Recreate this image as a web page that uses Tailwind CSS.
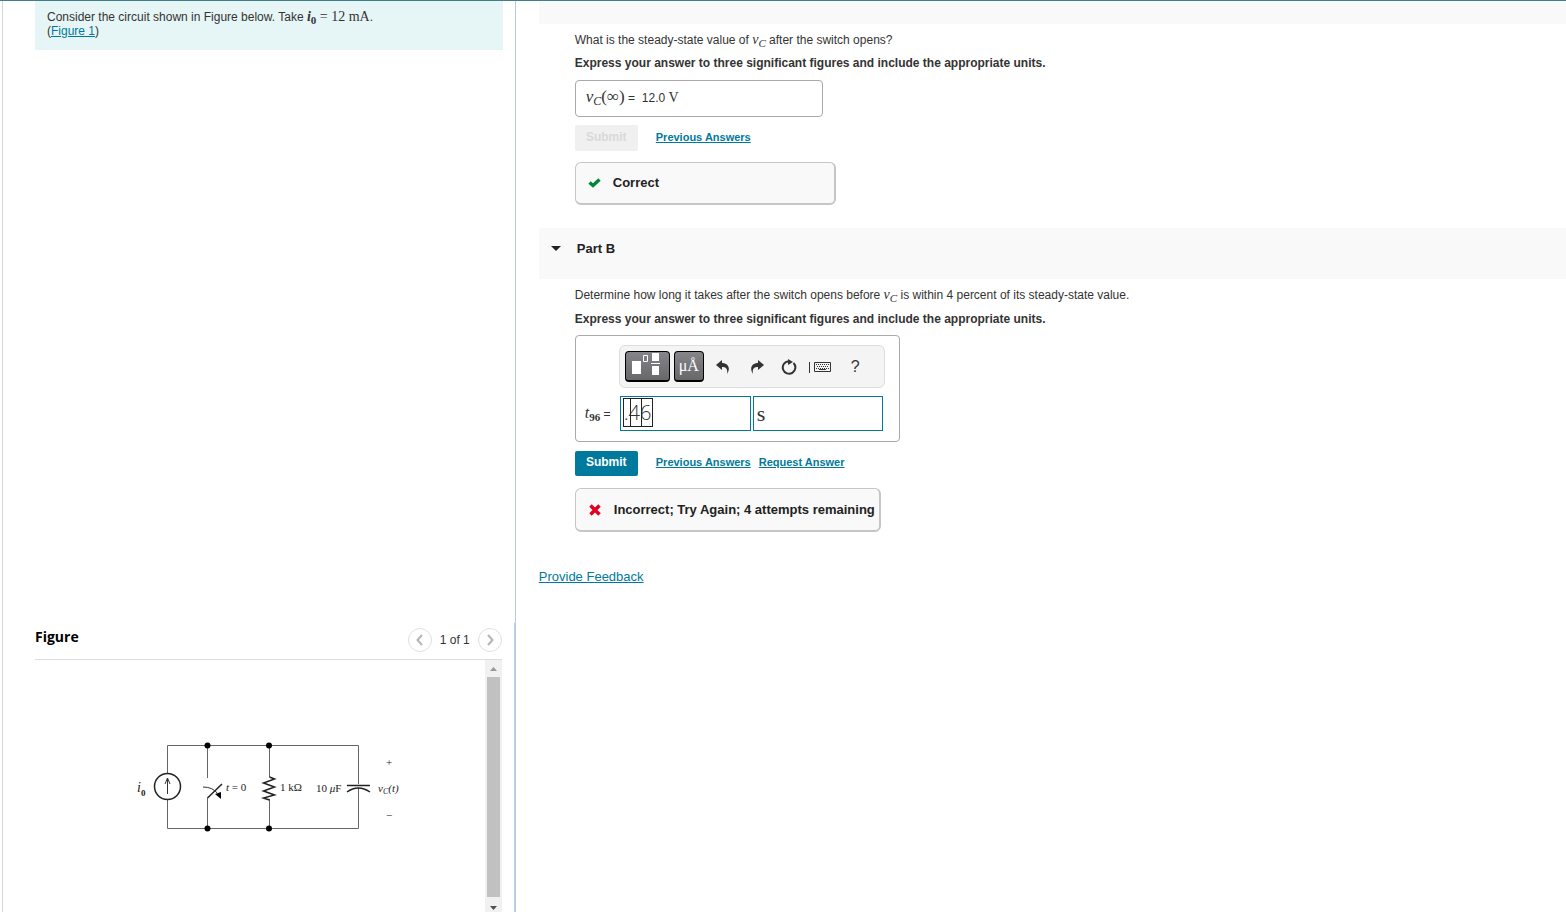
<!DOCTYPE html>
<html lang="en">
<head>
    <meta charset="UTF-8">
    <meta name="viewport" content="width=device-width, initial-scale=1.0">
    <title>Circuit Problem - Part B</title>
    <script src="https://cdn.jsdelivr.net/npm/@tailwindcss/browser@4"></script>
</head>
<body class="bg-white h-screen flex overflow-hidden border-t border-[#3f8088] font-['Liberation_Sans',Arial,sans-serif] text-[12px] leading-[14px] text-[#333]">

    <!-- Left pane: problem statement and figure -->
    <aside class="w-[33%] shrink-0 flex pr-px">
        <div class="ml-[2px] flex-1 min-w-0 flex flex-col border-l border-[#d5d5d5]">
            <div class="flex-1 flex flex-col pl-8 pr-[12px] border-r border-[#b9c9dc]">
                <div class="bg-[#e6f6f6] h-[49px] pl-3 pt-[9px]">
                    <p>Consider the circuit shown in Figure below. Take <span class="font-['Liberation_Serif',serif] text-[14px]"><i class="font-bold">i</i><sub class="text-[11px] leading-none font-bold">0</sub> = 12 mA</span>.</p>
                    <p>(<a href="#figure" class="text-[#007a9c] underline">Figure 1</a>)</p>
                </div>
            </div>

            <section id="figure" class="h-[289px] flex flex-col pl-8 pr-[12px] border-r-2 border-[#b9cde0]">
                <div class="h-[37px] pb-[2px] flex items-center justify-between border-b border-[#ddd]">
                    <h2 class="font-['Open_Sans',sans-serif] text-[14px] font-bold text-black pb-[6px]">Figure</h2>
                    <div class="flex items-center gap-2">
                        <button aria-label="Previous figure" class="size-6 flex items-center justify-center rounded-full border border-[#e0e0e0]">
                            <svg class="size-3" viewBox="0 0 12 12" fill="none" stroke="#b5b5b5" stroke-width="2"><path d="M8 1 3.5 6 8 11"/></svg>
                        </button>
                        <span>1 of 1</span>
                        <button aria-label="Next figure" class="size-6 flex items-center justify-center rounded-full border border-[#e0e0e0]">
                            <svg class="size-3" viewBox="0 0 12 12" fill="none" stroke="#b5b5b5" stroke-width="2"><path d="M4 1l4.500 5L4 11"/></svg>
                        </button>
                    </div>
                </div>
                <div class="flex-1 flex min-h-0">
                    <div class="flex-1 flex justify-end pr-[65px] pt-[70px]">
                        <svg class="w-[300px] h-[115px]" viewBox="0 0 300 115" fill="none" stroke="#666" stroke-width="1" font-family="Liberation Serif, serif" font-size="11">
                            <path d="M47.5 43V15.5H238.5V54M47.5 70V98.5H238.5V58M87.5 15V48M87.5 98V68M149.5 15V47M149.5 98V69"/>
                            <g fill="#000" stroke="none">
                                <circle cx="87.5" cy="15.5" r="3"/><circle cx="149" cy="15.5" r="3"/>
                                <circle cx="87.5" cy="98.5" r="3"/><circle cx="149" cy="98.5" r="3"/>
                                <path d="M95 64l6-2 0 7z"/>
                            </g>
                            <g stroke="#222" stroke-width="1.5">
                                <circle cx="47.5" cy="56.5" r="13"/>
                                <path d="M87.5 68 102 54M149.5 47l5 2-11 4 11 4-11 4 11 4-11 3 6 2M227 55.5H250M227 62q11-8 23 0"/>
                            </g>
                            <path stroke="#333" d="M47.5 64V48M45 54l2.500-6 2.500 6M83 57q10 0 15 7"/>
                            <g fill="#222" stroke="none">
                                <text x="17" y="62" font-size="14" font-style="italic">i<tspan font-size="9" font-style="normal" font-weight="bold" dy="4">0</tspan></text>
                                <text x="106" y="61"><tspan font-style="italic">t</tspan> = 0</text>
                                <text x="160" y="61">1 kΩ</text>
                                <text x="196" y="62">10 <tspan font-style="italic">μ</tspan>F</text>
                                <text x="258" y="62" font-style="italic">v<tspan font-size="8" dy="2">C</tspan><tspan dy="-2">(t)</tspan></text>
                                <text x="266" y="36">+</text>
                                <text x="266" y="89">−</text>
                            </g>
                        </svg>
                    </div>
                    <!-- Scrollbar -->
                    <div class="w-[17px] bg-[#f1f1f1] flex flex-col items-center justify-between">
                        <svg class="h-[17px] w-[17px]" viewBox="0 0 17 17"><path fill="#999" d="M5 11l3.500-4 3.500 4z"/></svg>
                        <div class="flex-1 w-[13px] bg-[#c1c1c1]"></div>
                        <svg class="h-[15px] w-[17px]" viewBox="0 0 17 15"><path fill="#505050" d="M5 9h7l-3.500 4z"/></svg>
                    </div>
                </div>
            </section>
        </div>
    </aside>

    <!-- Right pane: parts -->
    <main class="flex-1 min-w-0 pl-[22px]">
        <div class="h-[23px] bg-[#f9f9f9]"></div>

        <section class="pl-9 pt-2">
            <p class="leading-4">What is the steady-state value of <span class="font-['Liberation_Serif',serif] text-[14px] italic">v<sub class="text-[11px] leading-none">C</sub></span> after the switch opens?</p>
            <p class="mt-[7px] leading-4 font-bold">Express your answer to three significant figures and include the appropriate units.</p>
            <div class="mt-[9px] w-[248px] h-[37px] pl-[10px] pt-2 leading-4 border border-[#a9a9a9] rounded">
                <span class="font-['Liberation_Serif',serif] text-[17px]"><i>v<sub class="text-[12px] leading-none">C</sub></i>(∞)</span> =&nbsp; 12.0 <span class="font-['Liberation_Serif',serif] text-[14px]">V</span>
            </div>
            <div class="mt-2 flex items-center">
                <button disabled class="w-[63px] h-[26px] pb-[2px] rounded-xs bg-[#f0f0f0] text-[#d9d9d9] font-bold">Submit</button>
                <a href="#" class="ml-[18px] pb-[2px] text-[11px] font-bold text-[#007a9c] underline">Previous Answers</a>
            </div>
            <div class="mt-[11px] w-[261px] h-[43px] pl-3 flex items-center gap-3 rounded-md border border-b-2 border-r-2 border-[#c6c6c6] bg-[#f9f9f9] text-[13px] font-bold text-[#222]">
                <svg class="w-[13px] h-[10px]" viewBox="0 0 13 10" fill="none" stroke="#008638" stroke-width="3.5"><path d="M1.500 4.500 5 7.500l6.500-6"/></svg>
                Correct
            </div>
        </section>

        <header class="mt-[23px] h-[51px] pl-3 pt-[14px] flex items-start gap-4 bg-[#f9f9f9]">
            <svg class="w-[10px] h-[14px]" viewBox="0 0 10 14"><path fill="#222" d="M0 4h10L5 9z"/></svg>
            <h2 class="text-[13px] font-bold text-[#222]">Part B</h2>
        </header>

        <section class="pl-9 pt-2">
            <p class="leading-4">Determine how long it takes after the switch opens before <span class="font-['Liberation_Serif',serif] text-[14px] italic">v<sub class="text-[11px] leading-none">C</sub></span> is within 4 percent of its steady-state value.</p>
            <p class="mt-2 leading-4 font-bold">Express your answer to three significant figures and include the appropriate units.</p>
            <div class="mt-2 w-[325px] h-[107px] pt-[9px] pr-[14px] border border-[#a9a9a9] rounded">
                <div class="ml-[43px] w-[266px] h-[43px] pl-[5px] flex items-center rounded-md border border-[#ddd] bg-[#f4f4f4]">
                    <button aria-label="Templates" class="w-[45px] h-[31px] rounded border border-b-2 border-black bg-linear-to-b from-[#85858a] to-[#68686b]">
                        <svg class="w-[43px] h-[28px]" viewBox="0 0 43 28" fill="#fff"><path d="M6 9h9v13H6zM26 1h7v8h-7zM26 14h7v9h-7zM25 11h9v1h-9z"/><path fill="none" stroke="#fff" d="M17.500 3.500h4v6h-4z"/></svg>
                    </button>
                    <button aria-label="Units" class="ml-1 w-[30px] h-[31px] rounded border border-b-2 border-black bg-linear-to-b from-[#85858a] to-[#68686b] text-white text-[16px] leading-5 font-['Liberation_Serif',serif]">μÅ</button>
                    <button aria-label="Undo" class="ml-3"><svg class="w-[14px] h-[14px]" viewBox="0 0 14 14" fill="#333"><path d="M0 5l6-5v3c6 0 9 5 5 11 1-5-1-7-5-7v3z"/></svg></button>
                    <button aria-label="Redo" class="ml-5"><svg class="w-[14px] h-[14px]" viewBox="0 0 14 14" fill="#333"><path d="M14 5L8 0v3C2 3-1 8 3 14c-1-5 1-7 5-7v3z"/></svg></button>
                    <button aria-label="Reset" class="ml-[17px]"><svg class="w-4 h-4" viewBox="0 0 16 16"><path fill="none" stroke="#333" stroke-width="2" d="M12.500 4a6.300 6.300 0 1 1-5-1.800"/><path fill="#333" d="M7 0l5 3-5 3z"/></svg></button>
                    <button aria-label="Keyboard shortcuts" class="ml-3"><svg class="w-[22px] h-3" viewBox="0 0 22 12"><path fill="none" stroke="#333" d="M.5 1v11M5.500 1.500h16v9h-16z"/><path stroke="#333" stroke-dasharray="1 1" d="M7 3.500h13M8 5.500h12M7 7.500h13"/><path stroke="#333" d="M10 8.500h7"/></svg></button>
                    <button aria-label="Help" class="ml-5 text-[16px] leading-4">?</button>
                </div>
                <div class="mt-2 pl-[9px] flex items-center gap-[2px]">
                    <label for="timeValue" class="w-[33px] whitespace-nowrap"><span class="font-['Liberation_Serif',serif] text-[16px]"><i>t</i><sub class="text-[11px] leading-none font-bold">96</sub></span> =</label>
                    <div class="relative w-[131px] h-[35px]">
                        <input id="timeValue" type="text" value=".46" class="size-full pl-[3px] pb-[2px] border border-[#007a9c] font-['Open_Sans',sans-serif] font-light text-[20px]">
                        <!-- Character cells over the typed value -->
                        <div class="absolute left-[3px] top-[2px] h-[29px] flex pointer-events-none" aria-hidden="true">
                            <span class="w-[7px] border border-r-0 border-[#222]"></span>
                            <span class="w-[12px] border-y border-x border-[#222]"></span>
                            <span class="w-[11px] border border-l-0 border-[#222]"></span>
                        </div>
                    </div>
                    <input type="text" value="s" aria-label="Units" class="w-[130px] h-[35px] pl-[3px] border border-[#007a9c] font-['Liberation_Serif',serif] text-[22px]">
                </div>
            </div>
            <div class="mt-[9px] flex items-center">
                <button class="w-[63px] h-[25px] pb-1 rounded-xs bg-[#007a9c] text-white font-bold">Submit</button>
                <a href="#" class="ml-[18px] pb-[3px] text-[11px] font-bold text-[#007a9c] underline">Previous Answers</a>
                <a href="#" class="ml-2 pb-[3px] text-[11px] font-bold text-[#007a9c] underline">Request Answer</a>
            </div>
            <div class="mt-3 w-[306px] h-[44px] pl-[13px] flex items-center gap-[13px] rounded-md border border-b-2 border-r-2 border-[#c6c6c6] bg-[#f9f9f9] text-[13px] font-bold text-[#222] whitespace-nowrap">
                <svg class="size-3 shrink-0" viewBox="0 0 12 12" fill="none" stroke="#e0001f" stroke-width="3.5"><path d="M1.500 1.500l9 9M10.500 1.500l-9 9"/></svg>
                Incorrect; Try Again; 4 attempts remaining
            </div>
        </section>

        <a href="#" class="inline-block mt-[38px] text-[13px] text-[#007a9c] underline">Provide Feedback</a>
    </main>
</body>
</html>
